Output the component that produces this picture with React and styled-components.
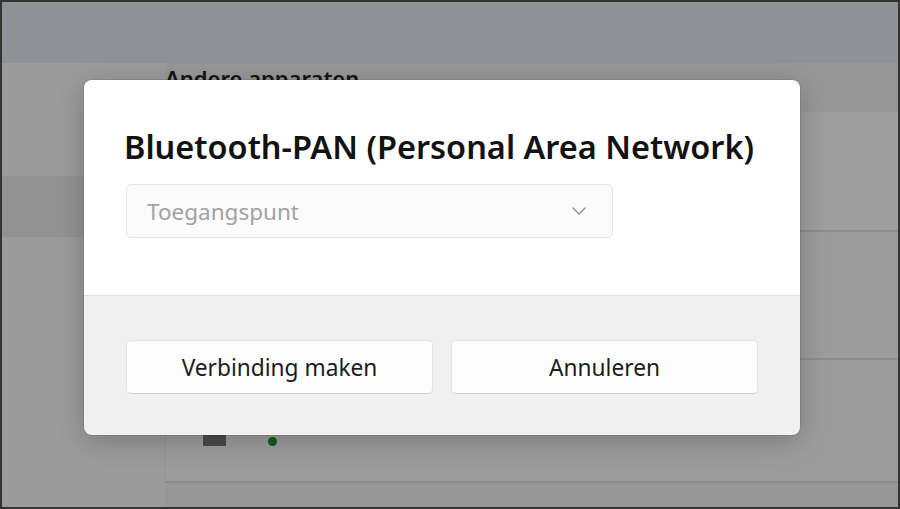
import React from 'react';
import styled, { createGlobalStyle } from 'styled-components';
import { ChevronDown } from 'lucide-react';

const GlobalStyle = createGlobalStyle`
  html, body { margin: 0; padding: 0; }
  body { font-family: "Noto Sans", "Open Sans", sans-serif; background: #2e2e2e; }
  * { box-sizing: border-box; }
`;

const Frame = styled.div`
  position: relative;
  width: 900px;
  height: 509px;
  border: 2px solid #333;
  overflow: hidden;
  display: flex;
  flex-direction: column;
  background: #979797;
`;

const TopBar = styled.div`
  height: 61px;
  background: #8e9195;
  flex-shrink: 0;
`;

const Main = styled.div`
  flex: 1;
  display: flex;
`;

const Nav = styled.div`
  width: 163px;
  padding-top: 113px;
  background: #9b9b9b;
`;

const NavItem = styled.div`
  height: 61px;
  background: ${(p) => (p.active ? '#929292' : 'transparent')};
`;

const Content = styled.div`
  flex: 1;
  display: flex;
  flex-direction: column;
`;

const SectionHeading = styled.div`
  height: 49px;
  font-size: 22px;
  line-height: 30px;
  font-weight: 600;
  color: #151515;
`;

const Card = styled.div`
  height: ${(p) => p.h}px;
  background: ${(p) => p.bg || '#9c9c9c'};
  border-bottom: 2px solid #8c8c8c;
  border-left: 1px solid #939393;
  display: flex;
  align-items: flex-end;
  gap: 42px;
  padding: 0 0 35px 37px;
`;

const DeviceIcon = styled.div`
  width: 23px;
  height: 18px;
  background: #4a4a4a;
  border-radius: 1px;
`;

const StatusDot = styled.div`
  width: 9px;
  height: 9px;
  border-radius: 50%;
  background: #0f5a1f;
`;

const Dialog = styled.div`
  position: absolute;
  left: 82px;
  top: 78px;
  width: 716px;
  height: 355px;
  border-radius: 8px;
  overflow: hidden;
  display: flex;
  flex-direction: column;
  box-shadow: 0 6px 28px rgba(0, 0, 0, 0.22), 0 0 0 1px rgba(0, 0, 0, 0.08);
`;

const DialogBody = styled.div`
  height: 215px;
  background: #ffffff;
  padding: 47px 40px 0 40px;
  display: flex;
  flex-direction: column;
  gap: 17px;
`;

const Title = styled.h1`
  margin: 0;
  font-size: 32.5px;
  line-height: 40px;
  font-weight: 600;
  color: #121212;
  white-space: nowrap;
`;

const Select = styled.div`
  width: 487px;
  height: 54px;
  margin-left: 2px;
  border: 1px solid #e6e6e6;
  border-radius: 5px;
  background: #fbfbfb;
  display: flex;
  align-items: center;
  justify-content: space-between;
  padding: 0 21px 0 20px;
  font-size: 22.5px;
  color: #a2a2a2;
`;

const Footer = styled.div`
  flex: 1;
  background: #f0f0f0;
  border-top: 1px solid #e2e2e2;
  padding: 44px 42px 0 42px;
  display: grid;
  grid-template-columns: 1fr 1fr;
  column-gap: 18px;
  align-items: start;
`;

const Button = styled.button`
  height: 54px;
  border: 1px solid #e4e4e4;
  border-bottom-color: #cfcfcf;
  border-radius: 5px;
  background: #fdfdfd;
  font-family: inherit;
  font-size: 22.7px;
  color: #1c1c1c;
`;

export default function App() {
  return (
    <>
      <GlobalStyle />
      <Frame>
        <TopBar />
        <Main>
          <Nav>
            <NavItem active />
          </Nav>
          <Content>
            <SectionHeading>Andere apparaten</SectionHeading>
            <Card h={120} bg="#9e9e9e" />
            <Card h={128} />
            <Card h={123}>
              <DeviceIcon />
              <StatusDot />
            </Card>
          </Content>
        </Main>

        <Dialog>
          <DialogBody>
            <Title>Bluetooth-PAN (Personal Area Network)</Title>
            <Select>
              <span>Toegangspunt</span>
              <ChevronDown size={24} strokeWidth={1.3} color="#8e8e8e" />
            </Select>
          </DialogBody>
          <Footer>
            <Button>Verbinding maken</Button>
            <Button>Annuleren</Button>
          </Footer>
        </Dialog>
      </Frame>
    </>
  );
}
